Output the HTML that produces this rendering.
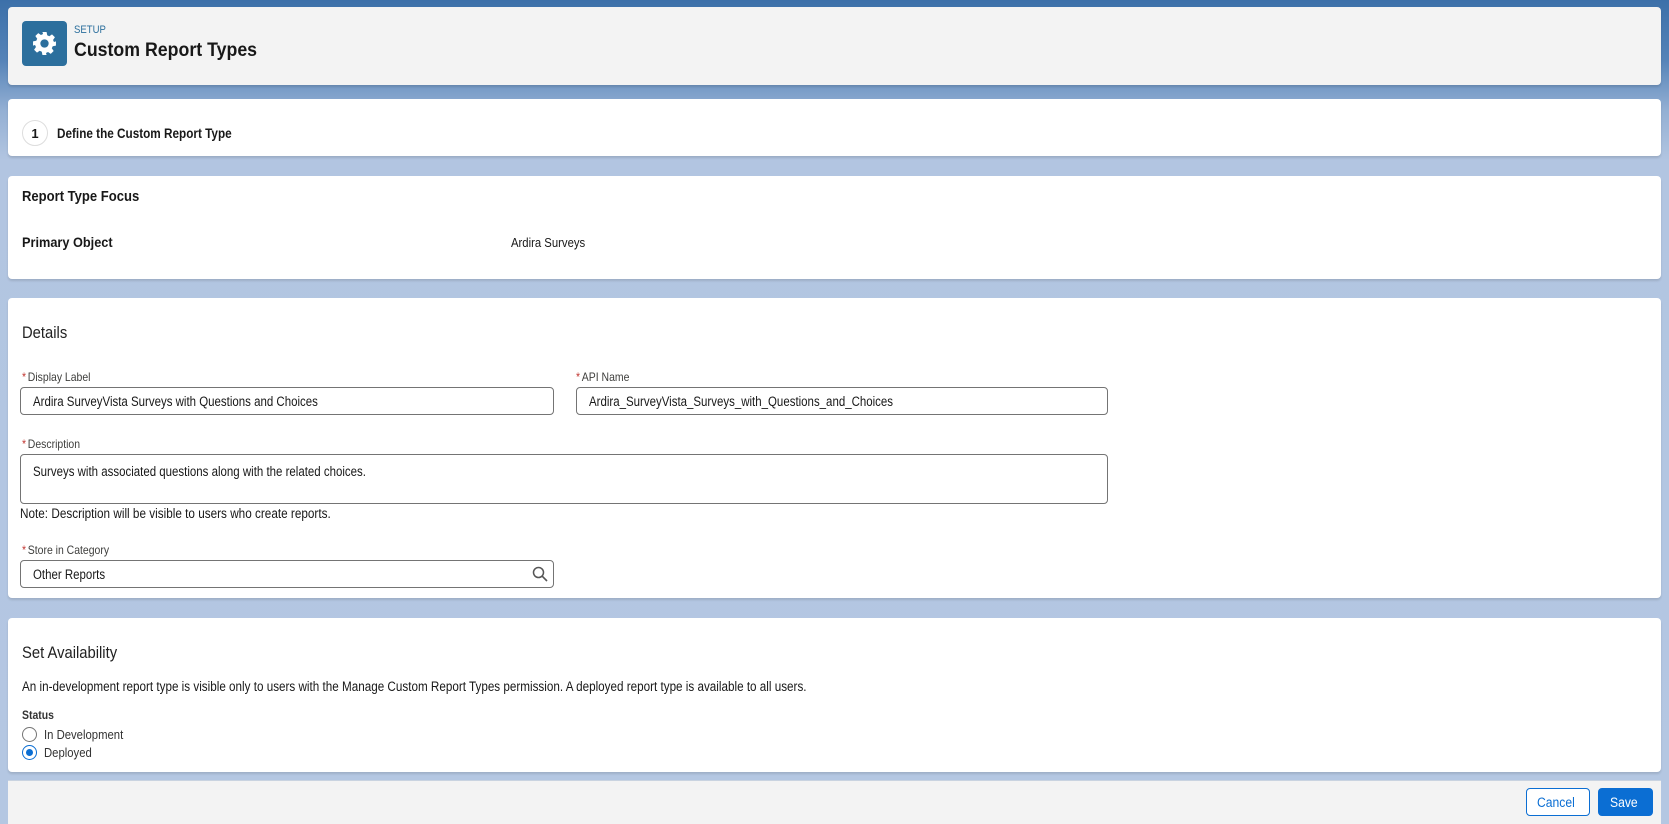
<!DOCTYPE html>
<html><head><meta charset="utf-8"><style>
*{box-sizing:border-box;margin:0;padding:0}
body{width:1669px;height:824px;overflow:hidden;position:relative;font-family:"Liberation Sans",sans-serif;color:#181818;
background:linear-gradient(#3c70a9 0px,#5583b8 60px,#93afd3 110px,#b2c5e1 160px,#b4c7e2 824px);}
.card{position:absolute;left:8px;width:1653px;background:#fff;border-radius:4px;box-shadow:0 2px 2px rgba(0,0,0,.12)}
.t{position:absolute;white-space:nowrap;line-height:1;transform:scaleX(.87);transform-origin:left center}
.s{display:inline-block;white-space:nowrap;transform:scaleX(.85);transform-origin:left center}
.lbl{font-size:12px;color:#3e3e3c}
.lbl b{color:#c23934;font-weight:normal;margin-right:2px}
.inp{position:absolute;border:1px solid #747474;border-radius:4px;background:#fff;font-size:13.5px;padding-left:12px;display:flex;align-items:center}
.radio{position:absolute;width:15px;height:15px;border:1px solid #747474;border-radius:50%;background:#fff}
.btn{position:absolute;top:788px;height:28px;border-radius:4px;font-size:13.5px;display:flex;align-items:center;justify-content:center}
</style></head><body>

<div class="card" style="top:7px;height:78px;background:#f3f3f3"></div>
<div style="position:absolute;left:22px;top:21px;width:45px;height:45px;background:#2c6f9d;border-radius:4px"></div>
<svg style="position:absolute;left:32px;top:31px" width="25" height="25" viewBox="0 0 24 24"><path fill="#fff" d="M10 1h4l.6 3.1 2 .9 2.6-1.8 2.8 2.8-1.8 2.6.9 2L23 10v4l-3.1.6-.9 2 1.8 2.6-2.8 2.8-2.6-1.8-2 .9L14 23h-4l-.6-3.1-2-.9-2.6 1.8-2.8-2.8 1.8-2.6-.9-2L1 14v-4l3.1-.6.9-2L3.2 4.8 6 2 8.6 3.8l2-.9z"/><circle cx="12" cy="12" r="4" fill="#2c6f9d"/></svg>
<div class="t" style="left:74px;top:25px;font-size:11px;color:#2c6f9d">SETUP</div>
<div class="t" style="left:74px;top:41px;font-size:19.5px;font-weight:bold;transform:scaleX(.91)">Custom Report Types</div>

<div class="card" style="top:99px;height:57px"></div>
<div style="position:absolute;left:22px;top:120px;width:26px;height:26px;border:1px solid #ddd;border-radius:50%;font-size:13px;font-weight:bold;display:flex;align-items:center;justify-content:center">1</div>
<div class="t" style="left:57px;top:127px;font-size:13.5px;font-weight:bold">Define the Custom Report Type</div>

<div class="card" style="top:176px;height:103px"></div>
<div class="t" style="left:22px;top:190px;font-size:14.5px;font-weight:bold;transform:scaleX(.9)">Report Type Focus</div>
<div class="t" style="left:22px;top:235px;font-size:14px;font-weight:bold;transform:scaleX(.91)">Primary Object</div>
<div class="t" style="left:511px;top:236px;font-size:13px">Ardira Surveys</div>

<div class="card" style="top:298px;height:300px"></div>
<div class="t" style="left:22px;top:324px;font-size:17px;color:#222">Details</div>
<div class="t lbl" style="left:22px;top:371px"><b>*</b>Display Label</div>
<div class="inp" style="left:20px;top:387px;width:534px;height:28px"><span class="s">Ardira SurveyVista Surveys with Questions and Choices</span></div>
<div class="t lbl" style="left:576px;top:371px"><b>*</b>API Name</div>
<div class="inp" style="left:576px;top:387px;width:532px;height:28px"><span class="s">Ardira_SurveyVista_Surveys_with_Questions_and_Choices</span></div>
<div class="t lbl" style="left:22px;top:438px"><b>*</b>Description</div>
<div class="inp" style="left:20px;top:454px;width:1088px;height:50px;align-items:flex-start;padding-top:9px"><span class="s">Surveys with associated questions along with the related choices.</span></div>
<div class="t" style="left:20px;top:507px;font-size:13.5px">Note: Description will be visible to users who create reports.</div>
<div class="t lbl" style="left:22px;top:544px"><b>*</b>Store in Category</div>
<div class="inp" style="left:20px;top:560px;width:534px;height:28px"><span class="s">Other Reports</span></div>
<svg style="position:absolute;left:532px;top:566px" width="16" height="16" viewBox="0 0 16 16"><circle cx="6.5" cy="6.5" r="5" fill="none" stroke="#555" stroke-width="1.5"/><path d="M10.2 10.2L15 15" stroke="#555" stroke-width="1.6"/></svg>

<div class="card" style="top:618px;height:154px"></div>
<div class="t" style="left:22px;top:644px;font-size:17px;color:#222">Set Availability</div>
<div class="t" style="left:22px;top:680px;font-size:13.5px;transform:scaleX(.865)">An in-development report type is visible only to users with the Manage Custom Report Types permission. A deployed report type is available to all users.</div>
<div class="t" style="left:22px;top:709px;font-size:12px;font-weight:bold;color:#333">Status</div>
<div class="radio" style="left:22px;top:727px"></div>
<div class="t" style="left:44px;top:728px;font-size:13px;color:#333">In Development</div>
<div class="radio" style="left:22px;top:745px;border-color:#0b6ed3"><div style="position:absolute;left:3px;top:3px;width:7px;height:7px;border-radius:50%;background:#0b6ed3"></div></div>
<div class="t" style="left:44px;top:746px;font-size:13px;color:#333">Deployed</div>

<div style="position:absolute;left:8px;top:780px;width:1653px;height:44px;background:#f3f3f3;border-top:1px solid #c9d3e0"></div>
<div class="btn" style="left:1526px;width:64px;border:1px solid #0b6ed3;background:#fff;color:#0b6ed3"><span class="s" style="transform:scaleX(.9)">Cancel</span></div>
<div class="btn" style="left:1598px;width:55px;background:#0b6ed3;color:#fff"><span class="s" style="transform:scaleX(.9)">Save</span></div>
</body></html>
